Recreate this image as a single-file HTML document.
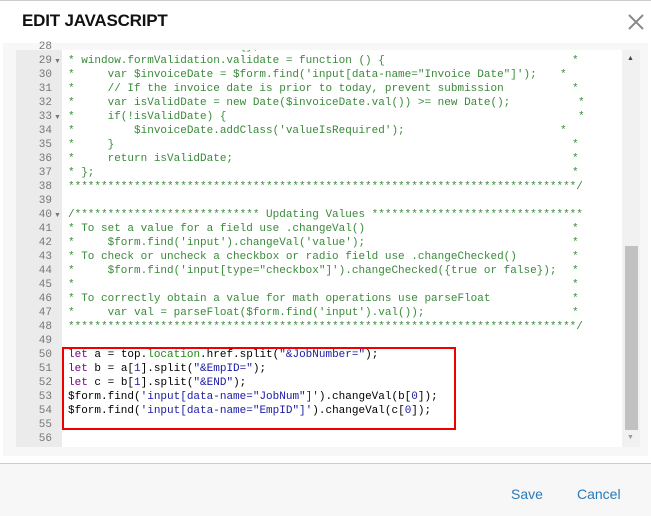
<!DOCTYPE html>
<html><head><style>
body{margin:0;width:651px;height:515px;background:#fff;font-family:"Liberation Sans",sans-serif;position:relative;overflow:hidden}
.top{position:absolute;left:0;top:0;width:651px;height:1px;background:#ccc}
h1{position:absolute;left:22px;top:11px;margin:0;font-size:17px;font-weight:bold;color:#111;letter-spacing:-0.2px}
.x{position:absolute;left:627px;top:13px}
.wrap{position:absolute;left:3px;top:43px;width:645px;height:413px;background:#f7f7f7}
.gut{position:absolute;left:16px;top:50px;width:46px;height:397px;background:#ebebeb}
.ed{position:absolute;left:62px;top:50px;width:560px;height:397px;background:#fff;overflow:hidden}
.sb{position:absolute;left:622px;top:50px;width:18px;height:397px;background:#f1f1f1}
.th{position:absolute;left:625px;top:246px;width:13px;height:184px;background:#c1c1c1}
.code{position:absolute;top:-10px;left:0;font-family:"Liberation Mono",monospace;font-size:11px;line-height:14px}
.ln{position:absolute;left:16px;top:40px;width:36px;text-align:right;font-family:"Liberation Mono",monospace;font-size:11px;line-height:14px;color:#777}
.fa{position:absolute;left:54px;font-size:7px;color:#777}
.l{position:relative;height:14px;white-space:pre;padding-left:6px;color:#000}
.c{color:#3a8a3a}
.r{position:absolute;color:#3a8a3a}
.k{color:#770088}.s{color:#1a1aa6}.n{color:#1a1aa6}.g{color:#228811}
.box{position:absolute;left:62px;top:347px;width:390px;height:79px;border:2px solid #e00}
.foot{position:absolute;left:0;top:463px;width:651px;height:52px;background:#f7f7f7;border-top:1px solid #ccc}
.btn{position:absolute;top:486px;font-size:14px;color:#2a7ab5}
</style></head><body>
<div class="top"></div>
<h1>EDIT JAVASCRIPT</h1>
<svg class="x" width="18" height="18" viewBox="0 0 18 18"><path d="M2 2L16 16M16 2L2 16" stroke="#888" stroke-width="2"/></svg>
<div class="wrap"></div>
<div class="gut"></div>
<div class="ln" style="top:40px">28<br>29<br>30<br>31<br>32<br>33<br>34<br>35<br>36<br>37<br>38<br>39<br>40<br>41<br>42<br>43<br>44<br>45<br>46<br>47<br>48<br>49<br>50<br>51<br>52<br>53<br>54<br>55<br>56</div>
<div class="fa" style="top:58px">▼</div><div class="fa" style="top:114px">▼</div><div class="fa" style="top:212px">▼</div>
<div class="ed"><div class="code">
<div class="l c">  window.formValidation = {};</div>
<div class="l c">* window.formValidation.validate = function () {<span class="r" style="left:510px">*</span></div>
<div class="l c">*     var $invoiceDate = $form.find('input[data-name="Invoice Date"]');<span class="r" style="left:498px">*</span></div>
<div class="l c">*     // If the invoice date is prior to today, prevent submission<span class="r" style="left:510px">*</span></div>
<div class="l c">*     var isValidDate = new Date($invoiceDate.val()) &gt;= new Date();<span class="r" style="left:516px">*</span></div>
<div class="l c">*     if(!isValidDate) {<span class="r" style="left:516px">*</span></div>
<div class="l c">*         $invoiceDate.addClass('valueIsRequired');<span class="r" style="left:498px">*</span></div>
<div class="l c">*     }<span class="r" style="left:510px">*</span></div>
<div class="l c">*     return isValidDate;<span class="r" style="left:510px">*</span></div>
<div class="l c">* };<span class="r" style="left:510px">*</span></div>
<div class="l c">*****************************************************************************/</div>
<div class="l"> </div>
<div class="l c">/**************************** Updating Values ********************************</div>
<div class="l c">* To set a value for a field use .changeVal()<span class="r" style="left:510px">*</span></div>
<div class="l c">*     $form.find('input').changeVal('value');<span class="r" style="left:510px">*</span></div>
<div class="l c">* To check or uncheck a checkbox or radio field use .changeChecked()<span class="r" style="left:510px">*</span></div>
<div class="l c">*     $form.find('input[type="checkbox"]').changeChecked({true or false});<span class="r" style="left:510px">*</span></div>
<div class="l c">*<span class="r" style="left:510px">*</span></div>
<div class="l c">* To correctly obtain a value for math operations use parseFloat<span class="r" style="left:510px">*</span></div>
<div class="l c">*     var val = parseFloat($form.find('input').val());<span class="r" style="left:510px">*</span></div>
<div class="l c">*****************************************************************************/</div>
<div class="l"> </div>
<div class="l"><span class="k">let</span> a = top.<span class="g">location</span>.href.split(<span class="s">"&amp;JobNumber="</span>);</div>
<div class="l"><span class="k">let</span> b = a[<span class="n">1</span>].split(<span class="s">"&amp;EmpID="</span>);</div>
<div class="l"><span class="k">let</span> c = b[<span class="n">1</span>].split(<span class="s">"&amp;END"</span>);</div>
<div class="l">$form.find(<span class="s">'input[data-name="JobNum"]'</span>).changeVal(b[<span class="n">0</span>]);</div>
<div class="l">$form.find(<span class="s">'input[data-name="EmpID"]'</span>).changeVal(c[<span class="n">0</span>]);</div>
</div></div>
<div class="sb"></div><div class="th"></div>
<div style="position:absolute;left:627px;top:55px;font-size:7px;color:#444">▲</div>
<div style="position:absolute;left:627px;top:434px;font-size:7px;color:#999">▼</div>
<div class="box"></div>
<div class="foot"></div>
<div class="btn" style="left:511px">Save</div>
<div class="btn" style="left:577px">Cancel</div>
</body></html>
